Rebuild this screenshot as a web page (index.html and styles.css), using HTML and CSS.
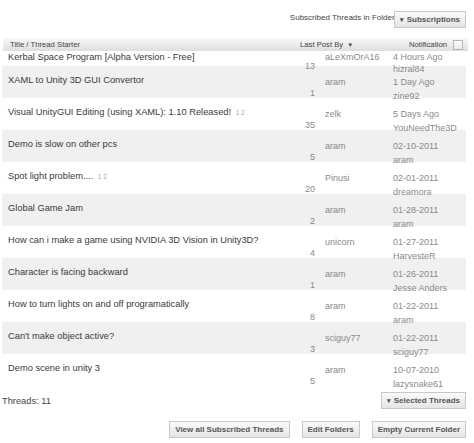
FILE: index.html
```html
<!DOCTYPE html>
<html lang="en">
<head>
  <meta charset="UTF-8" />
  <title>Subscribed Threads</title>
  <link rel="stylesheet" href="styles.css">
</head>
<body>
  <div class="folder-bar">
    <span class="folder-label">Subscribed Threads in Folder</span>
    <button class="btn"><span class="arrow">&#9662;</span>Subscriptions</button>
  </div>

  <div class="thread-head">
    <span class="head-title">Title / Thread Starter</span>
    <span class="head-last">Last Post By <span class="sort">&#9660;</span></span>
    <span class="head-notify">Notification</span>
    <span class="check"></span>
  </div>

  <div class="threads">
    <div class="thread first">
      <div class="t-title">Kerbal Space Program [Alpha Version - Free]</div>
      <div class="t-count">13</div>
      <div class="t-starter">aLeXmOrA16</div>
      <div class="t-last">4 Hours Ago<br>hizral84</div>
    </div>
    <div class="thread alt">
      <div class="t-title">XAML to Unity 3D GUI Convertor</div>
      <div class="t-count">1</div>
      <div class="t-starter">aram</div>
      <div class="t-last">1 Day Ago<br>zine92</div>
    </div>
    <div class="thread">
      <div class="t-title">Visual UnityGUI Editing (using XAML): 1.10 Released! <span class="pages">1 2</span></div>
      <div class="t-count">35</div>
      <div class="t-starter">zelk</div>
      <div class="t-last">5 Days Ago<br>YouNeedThe3D</div>
    </div>
    <div class="thread alt">
      <div class="t-title">Demo is slow on other pcs</div>
      <div class="t-count">5</div>
      <div class="t-starter">aram</div>
      <div class="t-last">02-10-2011<br>aram</div>
    </div>
    <div class="thread">
      <div class="t-title">Spot light problem.... <span class="pages">1 2</span></div>
      <div class="t-count">20</div>
      <div class="t-starter">Pinusi</div>
      <div class="t-last">02-01-2011<br>dreamora</div>
    </div>
    <div class="thread alt">
      <div class="t-title">Global Game Jam</div>
      <div class="t-count">2</div>
      <div class="t-starter">aram</div>
      <div class="t-last">01-28-2011<br>aram</div>
    </div>
    <div class="thread">
      <div class="t-title">How can i make a game using NVIDIA 3D Vision in Unity3D?</div>
      <div class="t-count">4</div>
      <div class="t-starter">unicorn</div>
      <div class="t-last">01-27-2011<br>HarvesteR</div>
    </div>
    <div class="thread alt">
      <div class="t-title">Character is facing backward</div>
      <div class="t-count">1</div>
      <div class="t-starter">aram</div>
      <div class="t-last">01-26-2011<br>Jesse Anders</div>
    </div>
    <div class="thread">
      <div class="t-title">How to turn lights on and off programatically</div>
      <div class="t-count">8</div>
      <div class="t-starter">aram</div>
      <div class="t-last">01-22-2011<br>aram</div>
    </div>
    <div class="thread alt">
      <div class="t-title">Can't make object active?</div>
      <div class="t-count">3</div>
      <div class="t-starter">sciguy77</div>
      <div class="t-last">01-22-2011<br>sciguy77</div>
    </div>
    <div class="thread">
      <div class="t-title">Demo scene in unity 3</div>
      <div class="t-count">5</div>
      <div class="t-starter">aram</div>
      <div class="t-last">10-07-2010<br>lazysnake61</div>
    </div>
  </div>

  <div class="threads-foot">
    <span class="total">Threads: 11</span>
    <button class="btn"><span class="arrow">&#9662;</span>Selected Threads</button>
  </div>

  <div class="actions">
    <button class="btn">View all Subscribed Threads</button>
    <button class="btn">Edit Folders</button>
    <button class="btn">Empty Current Folder</button>
  </div>
</body>
</html>
```

FILE: styles.css
```css
:root {
  --texto: #3a3a3a;
  --gris-texto: #8a8a8a;
  --fila-alt: #f0f0f0;
  --borde-btn: #c9c9c9;
}

body {
  margin: 0;
  width: 474px;
  font-family: "Liberation Sans", Arial, sans-serif;
  color: var(--texto);
  background: #ffffff;
}

/* barra superior con la carpeta */
.folder-bar {
  display: flex;
  justify-content: flex-end;
  align-items: center;
  padding: 11px 8px 0 0;
  height: 17px;
}

.folder-label {
  font-size: 8px;
  color: #444;
  margin-right: -1px;
  margin-top: -4px;
}

.btn {
  height: 17px;
  padding: 0 5px;
  border: 1px solid var(--borde-btn);
  background: linear-gradient(#fbfbfb, #e4e4e4);
  font-family: "Liberation Sans", Arial, sans-serif;
  font-weight: bold;
  font-size: 8px;
  color: #555;
  cursor: pointer;
}

.btn .arrow {
  font-size: 7px;
  margin-right: 3px;
}

/* cabecera de la tabla */
.thread-head {
  display: flex;
  align-items: center;
  margin: 10px 6px 0 3px;
  height: 13px;
  background: linear-gradient(#f9f9f9, #dedede);
  font-size: 7.7px;
  color: #444;
}

.head-title {
  width: 290px;
  padding-left: 7px;
}

.head-last {
  width: 109px;
}

.sort {
  font-size: 6px;
  margin-left: 2px;
}

.head-notify {
  flex: 1;
}

.check {
  width: 8px;
  height: 8px;
  margin-right: 5px;
  border: 1px solid #b5b5b5;
  background: linear-gradient(#ffffff, #e6e6e6);
}

/* filas de hilos */
.threads {
  margin: 0 8px 0 2px;
}

.thread {
  display: grid;
  grid-template-columns: 293px 20px 78px 1fr;
  align-items: start;
  height: 32px;
}

.thread.alt {
  background-color: var(--fila-alt);
}

.t-title {
  padding: 8px 0 0 6px;
  font-size: 9.3px;
  line-height: 12px;
  white-space: nowrap;
}

.pages {
  font-size: 6.5px;
  color: #a5a5a5;
  margin-left: 2px;
}

.t-count {
  padding-top: 21px;
  text-align: right;
  font-size: 9px;
  line-height: 12px;
  color: var(--gris-texto);
}

.t-starter {
  padding: 9px 0 0 10px;
  font-size: 9px;
  line-height: 14px;
  color: var(--gris-texto);
}

.t-last {
  padding-top: 9px;
  font-size: 9px;
  line-height: 14px;
  color: var(--gris-texto);
  white-space: nowrap;
}

/* la primera fila queda recortada bajo la cabecera */
.thread.first {
  height: 15px;
}

.thread.first .t-title {
  padding-top: 0;
}

.thread.first .t-count {
  padding-top: 9px;
}

.thread.first .t-starter,
.thread.first .t-last {
  padding-top: 0;
  line-height: 12px;
}

/* pie */
.threads-foot {
  display: flex;
  justify-content: space-between;
  align-items: center;
  margin: 6px 8px 0 2px;
}

.total {
  font-size: 9.3px;
  color: #444;
}

.actions {
  display: flex;
  justify-content: flex-end;
  gap: 12px;
  margin: 12px 8px 0 0;
}
```
